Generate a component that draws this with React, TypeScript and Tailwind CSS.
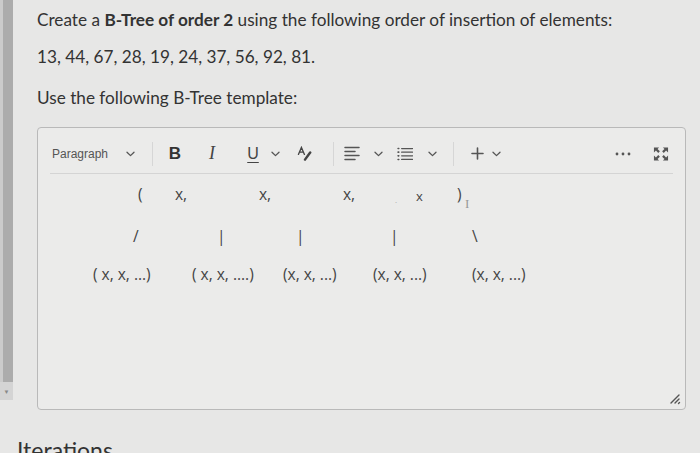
import React from 'react';

const Chevron = () => (
  <svg width="9" height="6" viewBox="0 0 9 6" fill="none" stroke="#555" strokeWidth="1.3" strokeLinecap="round" strokeLinejoin="round">
    <path d="M1 1.2l3.5 3.4L8 1.2" />
  </svg>
);

const Sep = () => <div className="w-px h-[24px] bg-[#d6d6d6]" />;

const Slot = ({ className = '', children }: { className?: string; children?: React.ReactNode }) => (
  <div className={`w-[16px] flex items-center justify-center shrink-0 ${className}`}>{children}</div>
);

function Toolbar() {
  return (
    <div className="flex items-center h-[40px] mx-[12px] border-b border-[#d4d4d4] text-[#444]">
      <div className="w-[72px] pl-[2px] text-[12px] text-[#555]" style={{ fontFamily: '"Liberation Sans", Arial, sans-serif' }}>Paragraph</div>
      <Slot><Chevron /></Slot>
      <Slot className="ml-[6px]"><Sep /></Slot>
      <Slot className="ml-[7px]">
        <span className="text-[17px] font-bold text-[#333]" style={{ fontFamily: '"Liberation Sans", Arial, sans-serif' }}>B</span>
      </Slot>
      <Slot className="ml-[21px]">
        <span className="text-[18px] italic text-[#444]" style={{ fontFamily: '"Liberation Serif", serif' }}>I</span>
      </Slot>
      <Slot className="ml-[25px]">
        <span className="text-[16px] underline underline-offset-[3px] text-[#444]" style={{ fontFamily: '"Liberation Sans", Arial, sans-serif' }}>U</span>
      </Slot>
      <Slot className="ml-[6px]"><Chevron /></Slot>
      <Slot className="ml-[14px]">
        <svg width="17" height="15" viewBox="0 0 17 15" fill="none" stroke="#444" strokeWidth="1.4" strokeLinecap="round">
          <path d="M1.5 8.5L4.7 1l3.2 7.5M2.7 6h4" />
          <path d="M8.5 14L14 6.5" strokeWidth="2.6" />
        </svg>
      </Slot>
      <Slot className="ml-[12px]"><Sep /></Slot>
      <Slot className="ml-[3px]">
        <svg width="16" height="15" viewBox="0 0 16 15" fill="none" stroke="#555" strokeWidth="1.5" strokeLinecap="round">
          <path d="M1 1.5h14M1 5.5h10M1 9.5h14M1 13.5h10" />
        </svg>
      </Slot>
      <Slot className="ml-[10px]"><Chevron /></Slot>
      <Slot className="ml-[11px]">
        <svg width="19" height="16" viewBox="0 0 19 16" fill="none" stroke="#555" strokeWidth="1.5" strokeLinecap="round">
          <path d="M5.5 1.5h13M5.5 5.8h13M5.5 10.2h13M5.5 14.5h13" />
          <path d="M1.3 1.5h.8M1.3 5.8h.8M1.3 10.2h.8M1.3 14.5h.8" strokeWidth="1.9" />
        </svg>
      </Slot>
      <Slot className="ml-[11px]"><Chevron /></Slot>
      <Slot className="ml-[5px]"><Sep /></Slot>
      <Slot className="ml-[8px]">
        <svg width="13" height="13" viewBox="0 0 13 13" fill="none" stroke="#555" strokeWidth="1.6" strokeLinecap="round">
          <path d="M6.5 1v11M1 6.5h11" />
        </svg>
      </Slot>
      <Slot className="ml-[3px]"><Chevron /></Slot>
      <div className="flex-1" />
      <Slot>
        <svg width="16" height="4" viewBox="0 0 16 4" fill="#555">
          <circle cx="2" cy="2" r="1.4" />
          <circle cx="8" cy="2" r="1.4" />
          <circle cx="14" cy="2" r="1.4" />
        </svg>
      </Slot>
      <Slot className="ml-[22px] mr-[4px]">
        <svg width="17" height="16" viewBox="0 0 17 16" fill="#555">
          <path d="M1 1h5.5L4.8 2.7 7.3 5.2 5.6 6.9 3.1 4.4 1 6.5z" />
          <path d="M16 1h-5.5l1.7 1.7-2.5 2.5 1.7 1.7 2.5-2.5L16 6.5z" />
          <path d="M1 15h5.5l-1.7-1.7 2.5-2.5-1.7-1.7-2.5 2.5L1 9.5z" />
          <path d="M16 15h-5.5l1.7-1.7-2.5-2.5 1.7-1.7 2.5 2.5L16 9.5z" />
        </svg>
      </Slot>
    </div>
  );
}

export default function App() {
  return (
    <div
      className="w-[700px] h-[453px] overflow-hidden flex bg-[#e7e7e6] text-[#333]"
      style={{ fontFamily: 'Lato, "Open Sans", sans-serif' }}
    >
      <div className="w-[13px] h-[400px] flex flex-col shrink-0">
        <div className="flex-1 flex">
          <div className="w-[3px] bg-[#cbcbcb]" />
          <div className="w-[10px] bg-[#acacac]" />
        </div>
        <div className="h-[18px] bg-[#d4d4d4] flex items-center justify-center text-[6px] text-[#888]">▼</div>
      </div>
      <div className="flex-1 pl-[24px] pr-[14px]">
        <p className="mt-[8px] text-[17.2px] leading-[24px]">
          Create a <b className="font-bold">B-Tree of order 2</b> using the following order of insertion of elements:
        </p>
        <p className="mt-[13px] text-[17.2px] leading-[24px]">13, 44, 67, 28, 19, 24, 37, 56, 92, 81.</p>
        <p className="mt-[17px] text-[17.2px] leading-[24px]">Use the following B-Tree template:</p>

        <div className="mt-[17px] h-[283px] rounded-[4px] border border-[#b9b9b9] bg-[#ebebea] flex flex-col pt-[6px]">
          <Toolbar />
          <div className="flex-1 relative text-[15.5px] text-[#444]" style={{ fontFamily: '"Open Sans", "Liberation Sans", sans-serif' }}>
            <div className="flex items-end h-[20px] mt-[12px] whitespace-pre">
              <span className="ml-[100px] w-[37px]">(</span>
              <span className="w-[84px]">x,</span>
              <span className="w-[84px]">x,</span>
              <span className="w-[52px]">x,</span>
              <span className="w-[21px] text-[#aaa] text-[8px]">.</span>
              <span className="w-[41px] text-[13px]">x</span>
              <span className="w-[8px]">)</span>
              <span className="-mb-[7px] text-[13px] text-[#999]" style={{ fontFamily: '"Liberation Serif", serif' }}>I</span>
            </div>
            <div className="flex items-end h-[20px] mt-[22px] whitespace-pre">
              <span className="ml-[95px] w-[84px]">/</span>
              <span className="w-[79px]">|</span>
              <span className="w-[94px]">|</span>
              <span className="w-[82px]">|</span>
              <span>\</span>
            </div>
            <div className="flex items-end h-[20px] mt-[18px] whitespace-pre">
              <span className="ml-[55px] w-[99px]">( x, x, ...)</span>
              <span className="w-[91px]">( x, x, ....)</span>
              <span className="w-[90px]">(x, x, ...)</span>
              <span className="w-[99px]">(x, x, ...)</span>
              <span>(x, x, ...)</span>
            </div>
            <div className="absolute right-[4px] bottom-[4px]">
              <svg width="12" height="12" viewBox="0 0 12 12" fill="none" stroke="#555" strokeWidth="1.4" strokeLinecap="round">
                <path d="M2 10L10 2M6 10l4-4M9.5 10.5l1-1" />
              </svg>
            </div>
          </div>
        </div>

        <div className="mt-[28px] -ml-[20px] text-[23px] leading-[24px] text-[#333]">Iterations</div>
      </div>
    </div>
  );
}
